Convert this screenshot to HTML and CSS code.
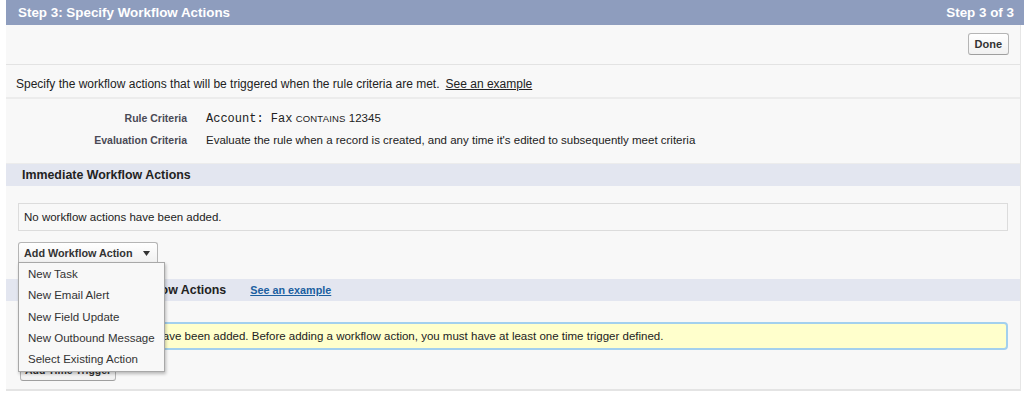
FILE: index.html
```html
<!DOCTYPE html>
<html>
<head>
<meta charset="utf-8">
<link rel="stylesheet" href="styles.css">
</head>
<body>
<div class="page">
  <div class="title-bar">
    <span class="title">Step 3: Specify Workflow Actions</span>
    <span class="step">Step 3 of 3</span>
  </div>
  <div class="panel">
    <div class="button-bar">
      <button class="btn">Done</button>
    </div>
    <div class="intro">Specify the workflow actions that will be triggered when the rule criteria are met. <a class="plain-link">See an example</a></div>
    <div class="criteria">
      <div class="label">Rule Criteria</div>
      <div class="value"><span class="mono">Account: Fax</span> <span class="op">CONTAINS</span> 12345</div>
      <div class="label">Evaluation Criteria</div>
      <div class="value">Evaluate the rule when a record is created, and any time it's edited to subsequently meet criteria</div>
    </div>
    <div class="section-head">Immediate Workflow Actions</div>
    <div class="section-body">
      <div class="empty-box">No workflow actions have been added.</div>
      <div class="menu-wrap">
        <button class="btn btn-menu">Add Workflow Action <svg class="caret" width="7" height="5" viewBox="0 0 7 5"><path d="M0 0H7L3.5 5Z" fill="#333"/></svg></button>
        <ul class="menu">
          <li>New Task</li>
          <li>New Email Alert</li>
          <li>New Field Update</li>
          <li>New Outbound Message</li>
          <li>Select Existing Action</li>
        </ul>
      </div>
    </div>
    <div class="section-head time-head">Time-Dependent Workflow Actions <a class="blue-link">See an example</a></div>
    <div class="section-body">
      <div class="warn-box">No workflow actions have been added. Before adding a workflow action, you must have at least one time trigger defined.</div>
      <button class="btn btn-trigger">Add Time Trigger</button>
    </div>
  </div>
</div>
</body>
</html>
```

FILE: styles.css
```css
html, body {
  margin: 0;
  padding: 0;
  background: #ffffff;
  font-family: "Liberation Sans", Arial, sans-serif;
  font-size: 12px;
  color: #222222;
}

.page {
  margin-left: 6px;
}

.title-bar {
  height: 25px;
  background: #8e9dbe;
  display: flex;
  justify-content: space-between;
  align-items: center;
  padding: 0 13px 0 12px;
  color: #ffffff;
  font-weight: bold;
  font-size: 13.4px;
  margin-right: -3px;
}

.panel {
  width: 1014px;
  background: #f8f8f8;
  border-right: 1px solid #e6e6e6;
  border-bottom: 2px solid #e4e4e4;
  padding-bottom: 8px;
}

.button-bar {
  height: 40px;
  display: flex;
  justify-content: flex-end;
  align-items: flex-start;
  padding: 8px 11px 0 0;
  box-sizing: border-box;
  border-bottom: 1px solid #e3e3e3;
}

.btn {
  font-family: "Liberation Sans", Arial, sans-serif;
  font-size: 11px;
  font-weight: bold;
  color: #333333;
  background: linear-gradient(#ffffff, #f1f1f1);
  border: 1px solid #b5b5b5;
  border-bottom-color: #9f9f9f;
  border-radius: 3px;
  padding: 0 6px;
  height: 22px;
  margin: 0;
}

.intro {
  height: 34px;
  box-sizing: border-box;
  display: flex;
  align-items: center;
  padding: 5px 0 0 10px;
  color: #222222;
  border-bottom: 2px solid #ececec;
}

.plain-link {
  color: #222222;
  text-decoration: underline;
  margin-left: 6px;
}

.criteria {
  display: grid;
  grid-template-columns: 181px 1fr;
  column-gap: 19px;
  row-gap: 0;
  padding: 9px 0 12px;
  border-bottom: 1px solid #ececec;
}

.criteria .label {
  text-align: right;
  font-weight: bold;
  font-size: 10.5px;
  color: #4a4a56;
  line-height: 21px;
}

.criteria .value {
  line-height: 21px;
  font-size: 11.5px;
  color: #222222;
}

.mono {
  font-family: "Liberation Mono", "Courier New", monospace;
  font-size: 12px;
}

.op {
  font-size: 9.5px;
  letter-spacing: 0.2px;
}

.section-head {
  height: 22px;
  background: #e3e6f0;
  display: flex;
  align-items: center;
  padding-left: 16px;
  font-weight: bold;
  font-size: 12.4px;
  color: #222222;
}

.section-body {
  padding: 17px 12px 0 12px;
}

.empty-box {
  height: 28px;
  box-sizing: border-box;
  border: 1px solid #dcdcdc;
  display: flex;
  align-items: center;
  padding-left: 5px;
  font-size: 11.5px;
  color: #222222;
}

.menu-wrap {
  position: relative;
  margin-top: 11px;
  margin-bottom: 17px;
  height: 20px;
}

.btn-menu {
  height: 21px;
  border-bottom-left-radius: 0;
  border-bottom-right-radius: 0;
  padding: 0 7px 0 5px;
  font-size: 10.8px;
}

.caret {
  margin-left: 7px;
  vertical-align: 1px;
}

.menu {
  position: absolute;
  top: 20px;
  left: 0;
  width: 145px;
  margin: 0;
  padding: 1px 0;
  list-style: none;
  background: #f8f8f8;
  border: 1px solid #a8a8a8;
  box-shadow: 1px 2px 3px rgba(0, 0, 0, 0.25);
  z-index: 5;
}

.menu li {
  line-height: 21.3px;
  padding-left: 9px;
  color: #333333;
  font-size: 11.5px;
}

.time-head .blue-link {
  margin-left: 24px;
  color: #1b5fa0;
  text-decoration: underline;
  font-weight: bold;
  font-size: 10.8px;
}

.warn-box {
  margin-top: 4px;
  height: 28px;
  box-sizing: border-box;
  border: 2px solid #a3d0ee;
  border-radius: 4px;
  background: #ffffcc;
  display: flex;
  align-items: center;
  padding-left: 31px;
  font-size: 11.5px;
  color: #222222;
}

.btn-trigger {
  margin: 8px 0 0 2px;
  height: 23px;
  padding: 0 4px;
  font-size: 10.5px;
}
```
